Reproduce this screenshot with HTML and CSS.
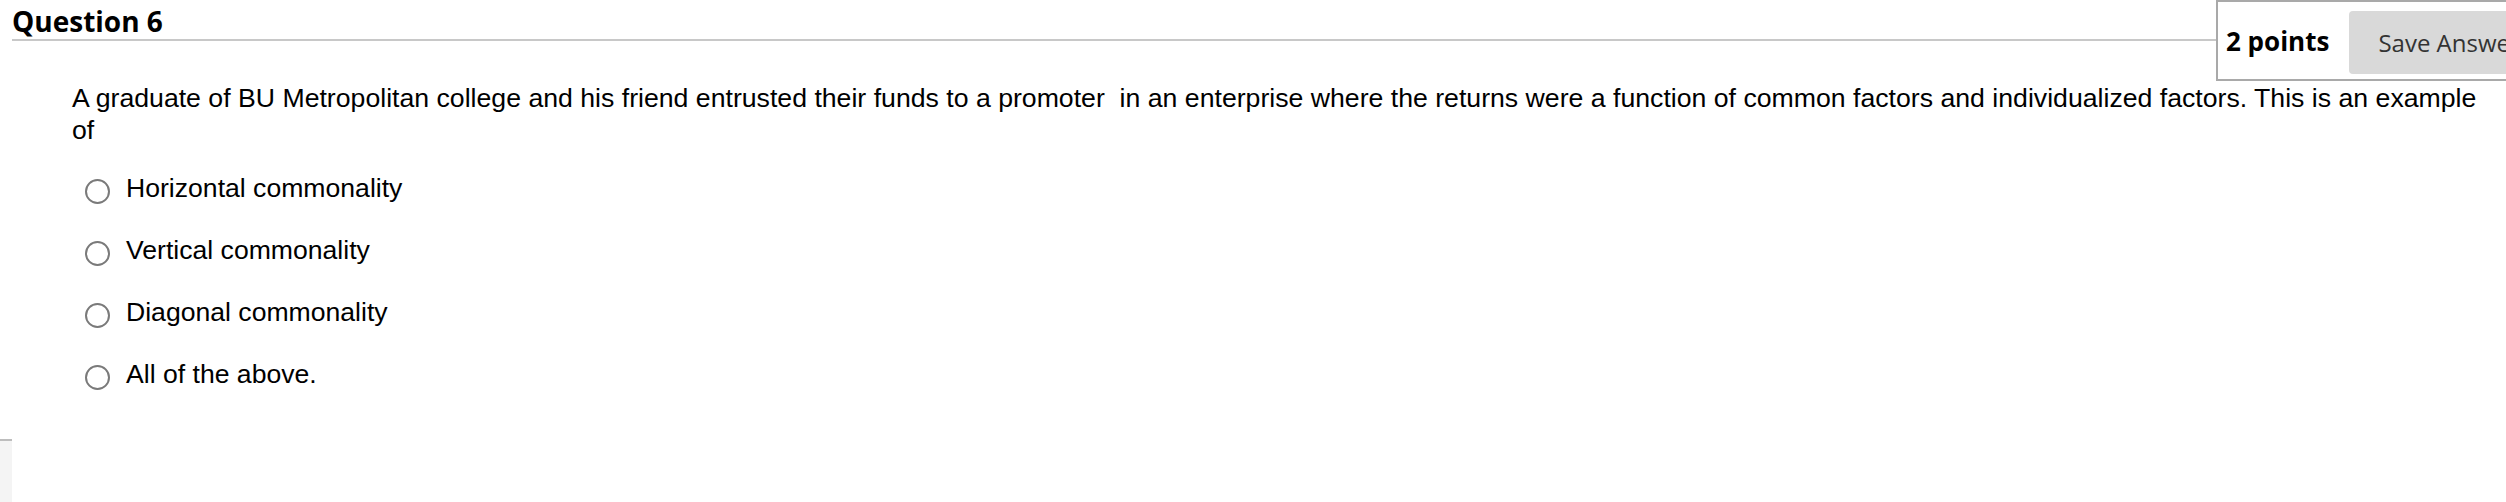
FILE: index.html
```html
<!DOCTYPE html>
<html lang="en">
<head>
<meta charset="utf-8">
<title>Question 6</title>
<link rel="stylesheet" href="styles.css">
</head>
<body>
<div class="page">
  <div class="question">
    <div class="q-header">
      <h2 class="q-title">Question 6</h2>
      <div class="q-points">
        <span class="points">2 points</span>
        <button class="save-btn" type="button">Save Answer</button>
      </div>
    </div>
    <p class="q-text">A graduate of BU Metropolitan college and his friend entrusted their funds to a promoter&nbsp; in an enterprise where the returns were a function of common factors and individualized factors. This is an example of</p>
    <ul class="options">
      <li class="option"><span class="radio"></span><span class="label">Horizontal commonality</span></li>
      <li class="option"><span class="radio"></span><span class="label">Vertical commonality</span></li>
      <li class="option"><span class="radio"></span><span class="label">Diagonal commonality</span></li>
      <li class="option"><span class="radio"></span><span class="label">All of the above.</span></li>
    </ul>
  </div>
  <div class="next-question">
    <div class="side-strip"></div>
  </div>
</div>
</body>
</html>
```
FILE: styles.css
```css
html, body {
  margin: 0;
  padding: 0;
  background: #ffffff;
  overflow: hidden;
}

.page {
  width: 2506px;
  height: 502px;
  overflow: hidden;
  display: flex;
  flex-direction: column;
}

.question {
  display: flex;
  flex-direction: column;
}

.q-header {
  display: flex;
  align-items: flex-start;
  padding-left: 12px;
  height: 81px;
}

.q-title {
  flex: none;
  width: 2204px;
  margin: 0;
  height: 41px;
  box-sizing: border-box;
  border-bottom: 2px solid #c8c8c8;
  font-family: "Open Sans", sans-serif;
  font-weight: 700;
  font-size: 28px;
  line-height: 38px;
  color: #000000;
  padding-top: 2px;
}

.q-points {
  flex: none;
  width: 340px;
  height: 81px;
  box-sizing: border-box;
  border: 2px solid #a9a9a9;
  border-right: none;
  display: flex;
  align-items: center;
  padding-left: 8px;
  gap: 20px;
}

.points {
  font-family: "Open Sans", sans-serif;
  font-weight: 700;
  font-size: 26px;
  color: #000000;
  white-space: nowrap;
}

.save-btn {
  flex: none;
  height: 63px;
  width: 200px;
  border: none;
  border-radius: 4px;
  background: #d9d9d9;
  font-family: "Open Sans", sans-serif;
  font-size: 24px;
  color: #333333;
  text-align: left;
  padding: 0 0 0 29px;
  white-space: nowrap;
  margin-top: 4px;
}

.q-text {
  margin: 1px 0 0 0;
  padding: 0 6px 0 72px;
  font-family: "Liberation Sans", Arial, sans-serif;
  font-size: 26.67px;
  line-height: 32px;
  color: #000000;
}

.options {
  list-style: none;
  margin: 25px 0 0 0;
  padding: 0 0 0 85px;
  display: flex;
  flex-direction: column;
  gap: 29px;
}

.option {
  display: flex;
  align-items: center;
  gap: 16px;
  font-family: "Liberation Sans", Arial, sans-serif;
  font-size: 26.6px;
  line-height: 32px;
  color: #000000;
}

.radio {
  flex: none;
  width: 21px;
  height: 21px;
  border: 2px solid #7a7a7a;
  border-radius: 50%;
  background: #ffffff;
  margin-top: 8px;
}

.next-question {
  margin-top: 49px;
  flex: 1;
  display: flex;
}

.side-strip {
  width: 12px;
  border-top: 2px solid #bdbdbd;
  background: #f4f4f4;
}
```
